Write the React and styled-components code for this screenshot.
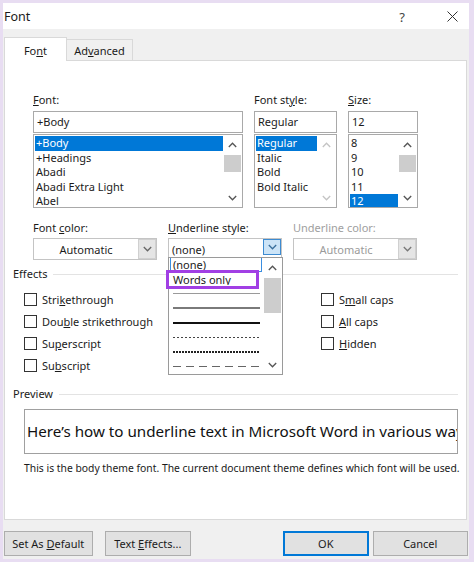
import React from 'react';
import styled, { createGlobalStyle } from 'styled-components';

const Global = createGlobalStyle`
  html, body { margin: 0; padding: 0; background: #e8ddf2; }
  body { font-family: "Noto Sans", "Open Sans", sans-serif; color: #1b1b1b; }
  * { box-sizing: border-box; }
`;

const Frame = styled.div`
  width: 474px;
  height: 562px;
  padding: 3px 5px 3px 3px;
  background: #e8ddf2;
  display: flex;
`;

const Window = styled.div`
  flex: 1;
  min-width: 0;
  display: flex;
  flex-direction: column;
  background: #f0f0f0;
`;

const TitleBar = styled.div`
  height: 26px;
  background: #ffffff;
  display: flex;
  align-items: center;
  padding: 1px 7px 0 1px;
  font-size: 12.5px;
  color: #1a1a1a;
`;

const TitleText = styled.div`
  flex: 1;
`;

const TitleBtn = styled.div`
  width: 20px;
  display: flex;
  justify-content: center;
  align-items: center;
  color: #444;
  font-size: 13px;
  margin-left: ${p => p.$gap || 0}px;
`;

const Body = styled.div`
  flex: 1;
  min-width: 0;
  display: flex;
  flex-direction: column;
  padding: 8px 1px 3px 1px;
`;

const TabBar = styled.div`
  display: flex;
  align-items: flex-end;
  height: 24px;
  margin-bottom: -1px;
  position: relative;
  z-index: 1;
`;

const Tab = styled.div`
  width: ${p => p.$w}px;
  height: ${p => (p.$active ? 24 : 22)}px;
  display: flex;
  align-items: center;
  justify-content: center;
  font-size: 11px;
  background: ${p => (p.$active ? '#ffffff' : '#f0f0f0')};
  border: 1px solid #d9d9d9;
  border-bottom: ${p => (p.$active ? 'none' : '1px solid #d9d9d9')};
  border-left: ${p => (p.$noLeft ? 'none' : '1px solid #d9d9d9')};
  padding-top: ${p => (p.$active ? 1 : 0)}px;
`;

const Panel = styled.div`
  height: 460px;
  min-width: 0;
  margin-right: 1px;
  background: #ffffff;
  border: 1px solid #d9d9d9;
  position: relative;
  padding-top: 32px;
  display: flex;
  flex-direction: column;
`;

const TopGrid = styled.div`
  display: grid;
  grid-template-columns: 210px 83px 70px;
  column-gap: 11px;
  margin-left: 28px;
`;

const Col = styled.div`
  display: flex;
  flex-direction: column;
`;

const Label = styled.div`
  font-size: 11px;
  line-height: 14px;
  height: 14px;
  margin-bottom: ${p => p.$mb ?? 4}px;
  color: ${p => (p.$disabled ? '#a0a0a0' : '#1b1b1b')};
  white-space: nowrap;
`;

const U = styled.span`
  text-decoration: underline;
  text-underline-offset: 1px;
`;

const TextInput = styled.div`
  height: 22px;
  border: 1px solid #a9a9a9;
  font-size: 11px;
  line-height: 20px;
  padding-left: 3px;
  margin-bottom: 1px;
`;

const ListBox = styled.div`
  height: 74px;
  border: 1px solid #a9a9a9;
  display: flex;
  overflow: hidden;
`;

const ListItems = styled.div`
  flex: 1;
  padding: 1px 1px 0 1px;
  display: flex;
  flex-direction: column;
`;

const ListItem = styled.div`
  height: 14.6px;
  line-height: 14.6px;
  font-size: 11px;
  padding-left: 1px;
  white-space: nowrap;
  background: ${p => (p.$selected ? '#0078d7' : 'transparent')};
  color: ${p => (p.$selected ? '#ffffff' : '#1b1b1b')};
`;

const ScrollBar = styled.div`
  width: 17px;
  display: flex;
  flex-direction: column;
  background: #ffffff;
  margin: 1px 1px 1px 0;
`;

const ScrollArrow = styled.div`
  height: 17px;
  display: flex;
  align-items: center;
  justify-content: center;
`;

const Track = styled.div`
  flex: 1;
  padding-top: ${p => p.$top}px;
`;

const Thumb = styled.div`
  height: ${p => p.$h}px;
  background: #cdcdcd;
`;

const Chevron = ({ up, color = '#606060' }) => (
  <svg width="9" height="6" viewBox="0 0 9 6">
    <path
      d={up ? 'M0.8 5 L4.5 1.2 L8.2 5' : 'M0.8 1 L4.5 4.8 L8.2 1'}
      fill="none"
      stroke={color}
      strokeWidth="1.3"
    />
  </svg>
);

const Scroller = ({ thumbTop, thumbH, disabled }) => (
  <ScrollBar>
    <ScrollArrow>
      <Chevron up color={disabled ? '#c4c4c4' : '#555'} />
    </ScrollArrow>
    <Track $top={thumbTop}>{thumbH ? <Thumb $h={thumbH} /> : null}</Track>
    <ScrollArrow>
      <Chevron color={disabled ? '#c4c4c4' : '#555'} />
    </ScrollArrow>
  </ScrollBar>
);

const SecondGrid = styled.div`
  display: grid;
  grid-template-columns: 124px 114px 124px;
  column-gap: 11px;
  margin-left: 28px;
  margin-top: 13px;
`;

const Combo = styled.div`
  height: 22px;
  border: 1px solid #c4c4c4;
  display: flex;
  align-items: stretch;
  font-size: 11px;
  color: ${p => (p.$disabled ? '#9a9a9a' : '#1b1b1b')};
`;

const ComboText = styled.div`
  flex: 1;
  display: flex;
  align-items: center;
  justify-content: ${p => (p.$center ? 'center' : 'flex-start')};
  padding-left: ${p => (p.$center ? 0 : 3)}px;
`;

const ComboBtn = styled.div`
  width: 18px;
  display: flex;
  align-items: center;
  justify-content: center;
  background: ${p => (p.$active ? '#cce4f7' : '#e5e5e5')};
  border: 1px solid ${p => (p.$active ? '#3d8bd1' : '#d0d0d0')};
  margin: ${p => (p.$active ? '0 0 4px 0' : '0')};
`;

const SectionHead = styled.div`
  display: flex;
  align-items: center;
  margin: ${p => p.$mt}px 8px 0 8px;
  font-size: 11px;
  line-height: 14px;
  gap: 6px;
`;

const Rule = styled.div`
  flex: 1;
  height: 1px;
  background: #e3e3e3;
`;

const CheckGrid = styled.div`
  display: grid;
  grid-template-columns: 297px 1fr;
  grid-auto-flow: column;
  grid-template-rows: repeat(4, 22px);
  margin: 7px 0 0 19px;
`;

const CheckRow = styled.div`
  display: flex;
  align-items: center;
  gap: 5px;
  font-size: 11px;
  grid-column: ${p => p.$col};
`;

const Box = styled.div`
  width: 13px;
  height: 13px;
  border: 1px solid #333;
  background: #fff;
`;

const PreviewBox = styled.div`
  margin: 8px 8px 0 19px;
  height: 45px;
  min-width: 0;
  border: 1px solid #a0a0a0;
  padding-left: 2px;
  line-height: 43px;
  overflow: hidden;
  white-space: nowrap;
  font-size: 15.2px;
  color: #111;
`;

const Note = styled.div`
  margin: 7px 0 0 19px;
  font-size: 10.35px;
  line-height: 14px;
  white-space: nowrap;
  color: #1b1b1b;
`;

const DropList = styled.div`
  position: absolute;
  left: 163px;
  top: 196px;
  width: 115px;
  height: 118px;
  background: #fff;
  border: 1px solid #9a9a9a;
  display: flex;
  z-index: 3;
`;

const DropItems = styled.div`
  flex: 1;
  display: flex;
  flex-direction: column;
  padding: 0 2px 0 1px;
  overflow: hidden;
`;

const DropText = styled.div`
  height: 14.8px;
  line-height: 14.8px;
  font-size: 11px;
  padding-left: 2px;
  border: ${p => (p.$focus ? '1px solid #3a8ee0' : '1px solid transparent')};
  margin-top: ${p => (p.$focus ? -1 : 0)}px;
  overflow: hidden;
  white-space: nowrap;
`;

const LineRow = styled.div`
  height: 14.8px;
  display: flex;
  align-items: center;
  padding: 0 2px 0 3px;
`;

const Stroke = styled.div`
  flex: 1;
  height: ${p => p.$h}px;
  background: ${p => p.$bg};
`;

const Highlight = styled.div`
  position: absolute;
  left: 161px;
  top: 209px;
  width: 93px;
  height: 19px;
  border: 3px solid #a13fe4;
  z-index: 4;
`;

const ButtonRow = styled.div`
  display: flex;
  margin-top: 11px;
  height: 25px;
`;

const Button = styled.div`
  width: ${p => p.$w}px;
  margin-left: ${p => p.$ml}px;
  height: 25px;
  background: #e1e1e1;
  border: 1px solid ${p => (p.$primary ? '#0078d7' : '#adadad')};
  box-shadow: ${p => (p.$primary ? 'inset 0 0 0 1px #0078d7' : 'none')};
  display: flex;
  align-items: center;
  justify-content: center;
  font-size: 11px;
  color: #1b1b1b;
  white-space: pre;
`;

const fonts = ['+Body', '+Headings', 'Abadi', 'Abadi Extra Light', 'Abel'];
const styles = ['Regular', 'Italic', 'Bold', 'Bold Italic'];
const sizes = ['8', '9', '10', '11', '12'];

const underlineStrokes = [
  { h: 1.5, bg: '#9a9a9a' },
  { h: 2.5, bg: '#7a7a7a' },
  { h: 2, bg: '#111' },
  { h: 1, bg: 'repeating-linear-gradient(90deg, #444 0 2px, transparent 2px 4px)' },
  { h: 2, bg: 'repeating-linear-gradient(90deg, #222 0 2px, transparent 2px 3px)' },
  { h: 1.5, bg: 'repeating-linear-gradient(90deg, #666 0 8px, transparent 8px 13px)' },
];

const leftChecks = [
  ['Stri', 'k', 'ethrough'],
  ['Dou', 'b', 'le strikethrough'],
  ['Su', 'p', 'erscript'],
  ['Su', 'b', 'script'],
];
const rightChecks = [
  ['S', 'm', 'all caps'],
  ['', 'A', 'll caps'],
  ['', 'H', 'idden'],
];

const Check = ({ col, parts }) => (
  <CheckRow $col={col}>
    <Box />
    <span>
      {parts[0]}
      <U>{parts[1]}</U>
      {parts[2]}
    </span>
  </CheckRow>
);

export default function App() {
  return (
    <>
      <Global />
      <Frame>
        <Window>
          <TitleBar>
            <TitleText>Font</TitleText>
            <TitleBtn>?</TitleBtn>
            <TitleBtn $gap={30}>
              <svg width="11" height="11" viewBox="0 0 11 11">
                <path d="M0.5 0.5 L10.5 10.5 M10.5 0.5 L0.5 10.5" stroke="#333" strokeWidth="1" />
              </svg>
            </TitleBtn>
          </TitleBar>
          <Body>
            <TabBar>
              <Tab $w={63} $active>
                Fo<U>n</U>t
              </Tab>
              <Tab $w={66} $noLeft>
                Ad<U>v</U>anced
              </Tab>
            </TabBar>
            <Panel>
              <TopGrid>
                <Col>
                  <Label>
                    <U>F</U>ont:
                  </Label>
                  <TextInput>+Body</TextInput>
                  <ListBox>
                    <ListItems>
                      {fonts.map((f, i) => (
                        <ListItem key={f} $selected={i === 0}>
                          {f}
                        </ListItem>
                      ))}
                    </ListItems>
                    <Scroller thumbTop={2} thumbH={17} />
                  </ListBox>
                </Col>
                <Col>
                  <Label>
                    Font st<U>y</U>le:
                  </Label>
                  <TextInput>Regular</TextInput>
                  <ListBox>
                    <ListItems>
                      {styles.map((f, i) => (
                        <ListItem key={f} $selected={i === 0}>
                          {f}
                        </ListItem>
                      ))}
                    </ListItems>
                    <Scroller disabled />
                  </ListBox>
                </Col>
                <Col>
                  <Label>
                    <U>S</U>ize:
                  </Label>
                  <TextInput>12</TextInput>
                  <ListBox>
                    <ListItems>
                      {sizes.map((f, i) => (
                        <ListItem key={f} $selected={i === 4}>
                          {f}
                        </ListItem>
                      ))}
                    </ListItems>
                    <Scroller thumbTop={2} thumbH={17} />
                  </ListBox>
                </Col>
              </TopGrid>

              <SecondGrid>
                <Col>
                  <Label $mb={3}>
                    Font <U>c</U>olor:
                  </Label>
                  <Combo>
                    <ComboText $center>Automatic</ComboText>
                    <ComboBtn>
                      <Chevron color="#666" />
                    </ComboBtn>
                  </Combo>
                </Col>
                <Col>
                  <Label $mb={3}>
                    <U>U</U>nderline style:
                  </Label>
                  <Combo>
                    <ComboText>(none)</ComboText>
                    <ComboBtn $active>
                      <Chevron color="#3a6f9c" />
                    </ComboBtn>
                  </Combo>
                </Col>
                <Col>
                  <Label $mb={3} $disabled>
                    Underline color:
                  </Label>
                  <Combo $disabled>
                    <ComboText $center>Automatic</ComboText>
                    <ComboBtn>
                      <Chevron color="#777" />
                    </ComboBtn>
                  </Combo>
                </Col>
              </SecondGrid>

              <SectionHead $mt={7}>
                Effects
                <Rule />
              </SectionHead>

              <CheckGrid>
                {leftChecks.map((p, i) => (
                  <Check key={'l' + i} col={1} parts={p} />
                ))}
                {rightChecks.map((p, i) => (
                  <Check key={'r' + i} col={2} parts={p} />
                ))}
              </CheckGrid>

              <SectionHead $mt={11}>
                Preview
                <Rule />
              </SectionHead>
              <PreviewBox>Here’s how to underline text in Microsoft Word in various ways:</PreviewBox>
              <Note>This is the body theme font. The current document theme defines which font will be used.</Note>

              <DropList>
                <DropItems>
                  <DropText $focus>(none)</DropText>
                  <DropText>Words only</DropText>
                  {underlineStrokes.map((s, i) => (
                    <LineRow key={i}>
                      <Stroke $h={s.h} $bg={s.bg} />
                    </LineRow>
                  ))}
                </DropItems>
                <ScrollBar>
                  <ScrollArrow>
                    <Chevron up color="#555" />
                  </ScrollArrow>
                  <Track $top={2}>
                    <Thumb $h={35} />
                  </Track>
                  <ScrollArrow>
                    <Chevron color="#555" />
                  </ScrollArrow>
                </ScrollBar>
              </DropList>
              <Highlight />
            </Panel>
            <ButtonRow>
              <Button $w={89} $ml={0}>
                {'Set As '}
                <U>D</U>
                {'efault'}
              </Button>
              <Button $w={87} $ml={12}>
                {'Text '}
                <U>E</U>
                {'ffects...'}
              </Button>
              <Button $w={86} $ml={92} $primary>
                OK
              </Button>
              <Button $w={96} $ml={4}>
                Cancel
              </Button>
            </ButtonRow>
          </Body>
        </Window>
      </Frame>
    </>
  );
}
